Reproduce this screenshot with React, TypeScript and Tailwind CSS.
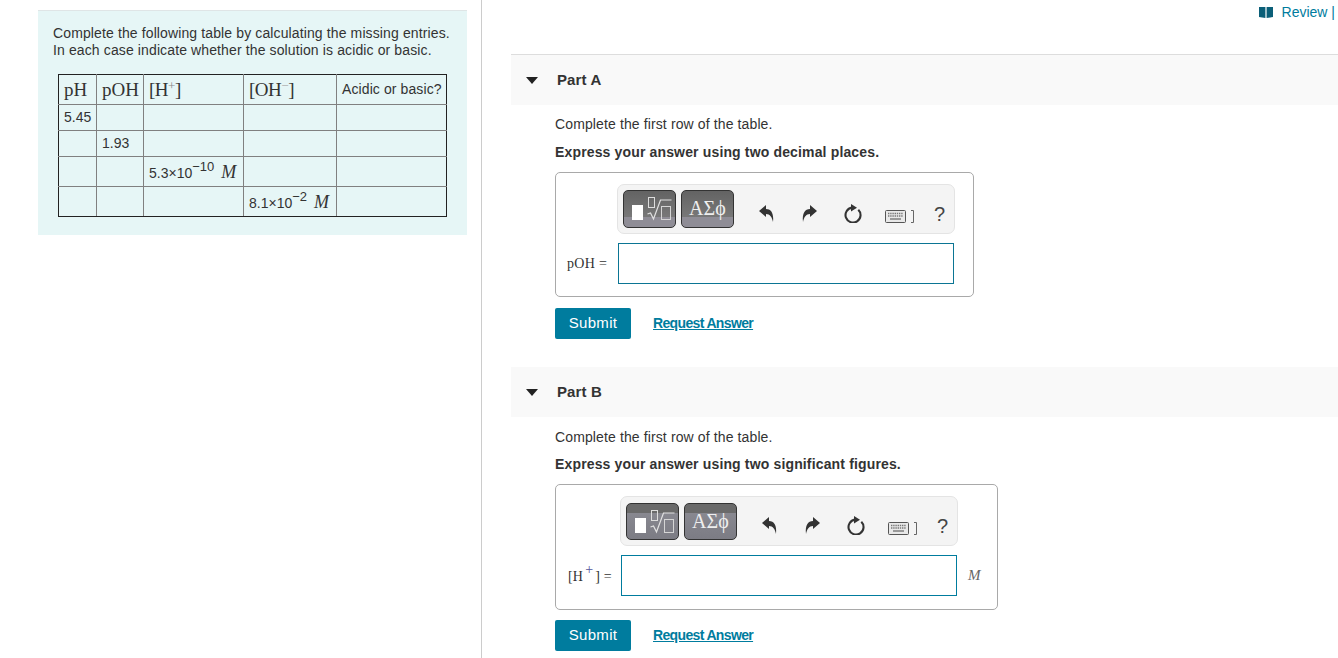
import { ReactNode } from 'react'

const serif = "font-['Liberation_Serif',serif]"

function Cell({ className = '', children }: { className?: string; children?: ReactNode }) {
  return (
    <td className={`border border-[#808080] px-[5px] align-middle first:border-l-[#222222] last:border-r-[#222222] ${className}`}>
      {children}
    </td>
  )
}

function SciValue({ base, exp }: { base: string; exp: string }) {
  return (
    <span className="whitespace-nowrap text-[14px]">
      {base}×10<sup className="relative -top-[1px] align-super text-[13px] leading-none">{exp}</sup>
      <span className={`${serif} ml-[7px] text-[18px] italic`}>M</span>
    </span>
  )
}

function LeftPanel() {
  return (
    <div className="h-[658px] w-[482px] shrink-0 border-r border-[#cccccc] pt-[10px] pl-[38px]">
      <div className="h-[225px] w-[429px] border-t border-[#dfe5e6] bg-[#e6f6f6] pt-[14px] pl-[15px] text-[14px] leading-[17px] tracking-[0.12px] text-[#333333]">
        <p>Complete the following table by calculating the missing entries.</p>
        <p>In each case indicate whether the solution is acidic or basic.</p>
        <table className="mt-[15px] ml-[5px] w-[389px] table-fixed border-collapse tracking-normal text-[#333333]">
          <colgroup>
            <col className="w-[38px]" />
            <col className="w-[47px]" />
            <col className="w-[100px]" />
            <col className="w-[93px]" />
            <col className="w-[110px]" />
          </colgroup>
          <tbody>
            <tr className={`h-[30px] ${serif} text-[19px] whitespace-nowrap [&>td]:border-t-[#222222]`}>
              <Cell>pH</Cell>
              <Cell className="px-[4px]">pOH</Cell>
              <Cell className="tracking-[-0.5px]">
                [H<sup className="text-[13px] text-[#888888]">+</sup>]
              </Cell>
              <Cell className="tracking-[-0.5px]">
                [OH<sup className="text-[13px] text-[#aaaaaa]">−</sup>]
              </Cell>
              <Cell className="px-[4px] font-['Liberation_Sans',sans-serif] text-[14px] tracking-[0.1px]">Acidic or basic?</Cell>
            </tr>
            <tr className="h-[26px]">
              <Cell>5.45</Cell>
              <Cell />
              <Cell />
              <Cell />
              <Cell />
            </tr>
            <tr className="h-[26px]">
              <Cell />
              <Cell>1.93</Cell>
              <Cell />
              <Cell />
              <Cell />
            </tr>
            <tr className="h-[30px]">
              <Cell />
              <Cell />
              <Cell>
                <SciValue base="5.3" exp="−10" />
              </Cell>
              <Cell />
              <Cell />
            </tr>
            <tr className="h-[30px] [&>td]:border-b-[#222222]">
              <Cell />
              <Cell />
              <Cell />
              <Cell>
                <SciValue base="8.1" exp="−2" />
              </Cell>
              <Cell />
            </tr>
          </tbody>
        </table>
      </div>
    </div>
  )
}

function PartHeader({ title }: { title: string }) {
  return (
    <div className="flex h-[50px] items-center bg-[#f9f9f9] text-[15px] font-bold text-[#333333]">
      <svg width="12" height="7" viewBox="0 0 12 7" className="ml-[15px]">
        <path d="M0 0H12L6 7z" fill="#222222" />
      </svg>
      <span className="ml-[19px] pt-[1px]">{title}</span>
    </div>
  )
}

function TemplatesIcon() {
  return (
    <svg width="52" height="36" viewBox="0 0 52 36" className="absolute top-0 left-0">
      <rect x="8" y="14" width="11" height="15" fill="#ffffff" />
      <rect x="24.5" y="6.5" width="6" height="10" fill="none" stroke="#dddddd" strokeWidth="1" />
      <path d="M23.5 23l3-1 3 6 7-19h11" fill="none" stroke="#e2e2e2" strokeWidth="1.2" />
      <rect x="37.5" y="15.5" width="9" height="13" fill="none" stroke="#d5d5d5" strokeWidth="1" />
    </svg>
  )
}

function Toolbar({ split }: { split: string }) {
  const btn = `relative w-[53px] rounded-[5px] border border-[#333333] ${split}`
  return (
    <div className="flex h-[50px] w-[338px] items-center rounded-[7px] border border-[#e4e4e4] bg-[#f4f4f4] pl-[5px]">
      <div className={btn}>
        <TemplatesIcon />
      </div>
      <div className={`${btn} ml-[5px] flex justify-center pt-[4px] ${serif} text-[20px] leading-[26px] text-[#eeeeee]`}>
        ΑΣϕ
      </div>
      <svg width="15" height="17" viewBox="0 0 15 17" className="mt-[9px] ml-[25px]">
        <path d="M0 6L7 0V4C12 4 15 8 14 17C13 12 11 9 7 9V12z" fill="#333333" />
      </svg>
      <svg width="15" height="17" viewBox="0 0 15 17" className="mt-[9px] ml-[28px]">
        <path d="M15 6L8 0V4C3 4 0 8 1 17C2 12 4 9 8 9V12z" fill="#333333" />
      </svg>
      <svg width="18" height="19" viewBox="0 0 18 19" className="mt-[9px] ml-[27px]">
        <path d="M14.3 5.7A7.5 7.5 0 1 1 8 3.6" fill="none" stroke="#333333" strokeWidth="2.1" />
        <path d="M7 0L13 3.8L7 7.6z" fill="#333333" />
      </svg>
      <svg width="21" height="13" viewBox="0 0 21 13" className="mt-[15px] ml-[23px]">
        <rect x="0.5" y="0.5" width="20" height="12" rx="1" fill="#e8e8e8" stroke="#555555" />
        <path d="M3 3.5h15M3 6h15" stroke="#777777" strokeWidth="1.4" strokeDasharray="1.4 0.8" />
        <path d="M5 9h11" stroke="#777777" strokeWidth="1.4" />
      </svg>
      <svg width="3" height="13" viewBox="0 0 3 13" className="mt-[15px] ml-[5px]">
        <path d="M0 0.5h2.5v12H0" fill="none" stroke="#666666" />
      </svg>
      <span className="mt-[10px] ml-[20px] text-[20px] leading-none text-[#444444]">?</span>
    </div>
  )
}

function SubmitRow() {
  return (
    <div className="flex items-center">
      <button className="h-[31px] w-[76px] rounded-[2px] bg-[#007c9e] text-[15px] tracking-[0.3px] text-white">Submit</button>
      <a className="ml-[22px] text-[14px] font-bold tracking-[-0.65px] text-[#007c9e] underline">Request Answer</a>
    </div>
  )
}

function RightPanel() {
  const splitA = 'h-[38px] bg-[linear-gradient(#636363,#787878_72%,#8f8d96_72%,#8f8d96)]'
  const splitB = 'mt-[1px] h-[37px] bg-[linear-gradient(#6a6a6a_25%,#888890_25%,#7c7c84)]'
  return (
    <div className="min-w-0 flex-1 pl-[29px] text-[14px] tracking-[0.12px] text-[#333333]">
      <div className="flex h-[54px] justify-end pt-[4px] pr-[3px] leading-[17px] text-[#007c9e]">
        <svg width="14" height="11" viewBox="0 0 14 11" className="mt-[3px] mr-[9px]">
          <path d="M0 0h6.4v11L0 10zM7.6 0H14v10l-6.4 1z" fill="#0b5f78" />
        </svg>
        <span className="text-[14px] tracking-normal">Review |</span>
      </div>
      <div className="border-t border-[#dddddd]" />

      <PartHeader title="Part A" />
      <div className="pl-[44px]">
        <p className="mt-[11px] leading-[17px]">Complete the first row of the table.</p>
        <p className="mt-[11px] leading-[17px] font-bold tracking-[0.15px]">Express your answer using two decimal places.</p>
        <div className="mt-[11px] h-[125px] w-[419px] rounded-[5px] border border-[#a9a9a9] pt-[11px] pl-[61px]">
          <Toolbar split={splitA} />
          <div className="mt-[9px] flex items-center">
            <span className={`${serif} absolute ml-[-50px] text-[14px] tracking-[0.3px]`}>pOH =</span>
            <div className="ml-[1px] h-[41px] w-[336px] border border-[#0b7594] bg-white" />
          </div>
        </div>
        <div className="mt-[11px]">
          <SubmitRow />
        </div>
      </div>

      <div className="mt-[28px]">
        <PartHeader title="Part B" />
      </div>
      <div className="pl-[44px]">
        <p className="mt-[12px] leading-[17px]">Complete the first row of the table.</p>
        <p className="mt-[10px] leading-[17px] font-bold tracking-[0.15px]">Express your answer using two significant figures.</p>
        <div className="mt-[11px] h-[126px] w-[443px] rounded-[5px] border border-[#a9a9a9] pt-[11px] pl-[64px]">
          <Toolbar split={splitB} />
          <div className="mt-[9px] flex items-center">
            <span className={`${serif} absolute mt-[2px] ml-[-52px] text-[14px] tracking-[0.2px]`}>
              [H<sup className="mx-[2px] text-[14px] text-[#555599]">+</sup>] =
            </span>
            <div className="ml-[1px] h-[41px] w-[336px] border border-[#007c9e] bg-white" />
            <span className={`${serif} ml-[11px] text-[15px] text-[#666666] italic`}>M</span>
          </div>
        </div>
        <div className="mt-[10px]">
          <SubmitRow />
        </div>
      </div>
    </div>
  )
}

export default function App() {
  return (
    <div className="flex h-[658px] w-[1338px] overflow-hidden bg-white font-['Liberation_Sans',sans-serif]">
      <LeftPanel />
      <RightPanel />
    </div>
  )
}
